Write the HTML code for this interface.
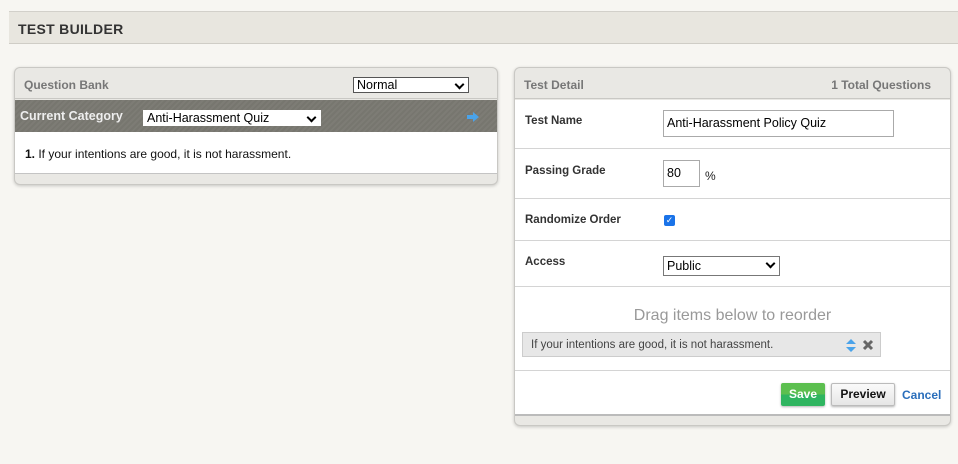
<!DOCTYPE html>
<html><head><style>
*{box-sizing:border-box;margin:0;padding:0}
body{width:958px;height:464px;background:#f7f6f2;font-family:"Liberation Sans",Arial,sans-serif;font-size:12px;color:#222;position:relative;overflow:hidden}
.abs{position:absolute}
.hdr{left:9px;top:11px;width:949px;height:33px;background:#e8e6df;border-top:1px solid #d2d0ca;border-bottom:1px solid #cfcdc6}
.hdr b{position:absolute;left:9px;top:9px;font-size:14px;color:#333;letter-spacing:.3px}
.panel{background:#e9e8e4;border:1px solid #c9c8c4;border-radius:6px;box-shadow:0 1px 3px rgba(0,0,0,.2)}
.ph{height:31px;border-bottom:1px solid #c9c8c4;font-weight:bold;color:#777;font-size:12px;padding:10px 9px}
.sel{position:absolute;background:#fff;border:1px solid #555;font-size:12.5px;height:16px;line-height:14px;padding-left:3px;color:#000}
.sel:after{content:"";position:absolute;right:5px;top:3px;width:5px;height:5px;border-right:2px solid #000;border-bottom:2px solid #000;transform:rotate(45deg)}
.row{position:absolute;left:0;width:100%;background:#fff;border-bottom:1px solid #d4d4d4}
.lbl{position:absolute;left:10px;font-weight:bold;font-size:11.5px;color:#333}
.inp{position:absolute;border:1px solid #aaa;background:#fff;font-size:12.5px;padding:5px 3px;height:27px;color:#000}
</style></head><body>
<div class="abs hdr"><b>TEST BUILDER</b></div>

<div class="abs panel" style="left:14px;top:67px;width:484px;height:118px;overflow:hidden">
 <div class="ph">Question Bank</div>
 <div class="sel" style="left:338px;top:9px;width:116px">Normal</div>
 <div class="abs" style="left:0;top:32px;width:100%;height:32px;background:repeating-linear-gradient(135deg,#7d7c75 0 2px,#77766f 2px 4px)"></div>
 <div class="abs" style="left:5px;top:41px;color:#eee;font-weight:bold;font-size:12.5px">Current Category</div>
 <div class="sel" style="left:128px;top:42px;width:178px;border-color:#fff">Anti-Harassment Quiz</div>
 <svg class="abs" style="left:451px;top:43px" width="14" height="12" viewBox="0 0 14 12"><path d="M1 4h6V1l6 5-6 5V8H1z" fill="#4aa3ea"/></svg>
 <div class="abs" style="left:0;top:64px;width:100%;height:42px;background:#fff;border-bottom:1px solid #c4c4c4"></div>
 <div class="abs" style="left:10px;top:79px;font-size:12px;color:#111"><b>1.</b> If your intentions are good, it is not harassment.</div>
</div>

<div class="abs panel" style="left:514px;top:67px;width:437px;height:359px;overflow:hidden">
 <div class="ph">Test Detail<span style="float:right;margin-right:10px">1 Total Questions</span></div>
 <div class="row" style="top:32px;height:49px"><span class="lbl" style="top:15px">Test Name</span><div class="inp" style="left:148px;top:10px;width:231px">Anti-Harassment Policy Quiz</div></div>
 <div class="row" style="top:81px;height:50px"><span class="lbl" style="top:16px">Passing Grade</span><div class="inp" style="left:148px;top:11px;width:37px">80</div><span class="abs" style="left:190px;top:20px">%</span></div>
 <div class="row" style="top:131px;height:42px"><span class="lbl" style="top:15px">Randomize Order</span><div class="abs" style="left:149px;top:16px;width:11px;height:11px;background:#1a73e8;border-radius:2px;color:#fff;font-size:9px;line-height:11px;text-align:center">✓</div></div>
 <div class="row" style="top:173px;height:46px"><span class="lbl" style="top:15px">Access</span><div class="sel" style="left:148px;top:15px;width:117px;height:20px;line-height:18px;border-color:#777">Public</div></div>
 <div class="row" style="top:219px;height:84px">
  <div class="abs" style="left:0;width:100%;top:20px;text-align:center;font-size:16px;color:#999">Drag items below to reorder</div>
  <div class="abs" style="left:7px;top:45px;width:359px;height:25px;background:#e7e7e7;border:1px solid #ccc;font-size:11.5px;color:#444;padding:6px 8px">If your intentions are good, it is not harassment.
   <svg class="abs" style="left:323px;top:6px" width="10" height="13" viewBox="0 0 10 13"><path d="M5 0l5 5H0zM5 13l5-5H0z" fill="#4aa3ea"/></svg>
   <svg class="abs" style="left:339px;top:6px" width="12" height="12" viewBox="0 0 12 12"><path d="M2 2l8 8M10 2l-8 8" stroke="#666" stroke-width="3"/></svg></div>
 </div>
 <div class="row" style="top:303px;height:45px;border-bottom:2px solid #bbb">
  <div class="abs" style="left:266px;top:12px;width:44px;height:23px;background:linear-gradient(#5cbf4f 50%,#2fb560 50%);border-radius:2px;color:#fff;font-weight:bold;text-align:center;line-height:23px;box-shadow:0 1px 2px rgba(0,0,0,.3)">Save</div>
  <div class="abs" style="left:316px;top:12px;width:64px;height:23px;background:linear-gradient(#fafafa,#e6e6e6);border:1px solid #bbb;border-radius:2px;color:#111;font-weight:bold;text-align:center;line-height:21px;box-shadow:0 1px 2px rgba(0,0,0,.3)">Preview</div>
  <div class="abs" style="left:387px;top:17px;color:#2a6ebb;font-weight:bold">Cancel</div>
 </div>
</div>
</body></html>
